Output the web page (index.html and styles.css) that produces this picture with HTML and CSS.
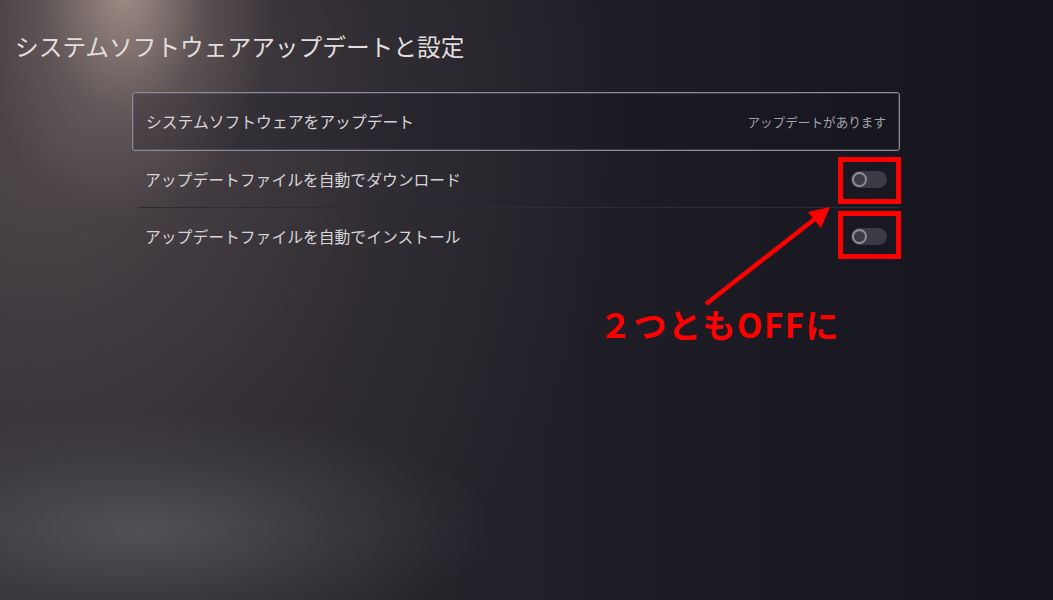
FILE: index.html
```html
<!DOCTYPE html>
<html lang="ja">
<head>
<meta charset="utf-8">
<link rel="stylesheet" href="styles.css">
</head>
<body>
<div class="screen">
  <h1 class="title">システムソフトウェアアップデートと設定</h1>
  <div class="list">
    <div class="row row-focus">
      <span class="label">システムソフトウェアをアップデート</span>
      <span class="value">アップデートがあります</span>
    </div>
    <div class="row row-sep">
      <span class="label">アップデートファイルを自動でダウンロード</span>
      <span class="toggle"><span class="knob"></span></span>
    </div>
    <div class="row">
      <span class="label">アップデートファイルを自動でインストール</span>
      <span class="toggle"><span class="knob"></span></span>
    </div>
  </div>
  <div class="mark mark-1"></div>
  <div class="mark mark-2"></div>
  <svg class="arrow" width="1053" height="600" viewBox="0 0 1053 600">
    <line x1="706" y1="304" x2="816" y2="218" stroke="#ff0000" stroke-width="4.5" stroke-linecap="butt"/>
    <polygon points="830,207 821,228 808,212" fill="#ff0000"/>
  </svg>
  <div class="note">２つともOFFに</div>
</div>
</body>
</html>
```
FILE: styles.css
```css
html, body {
  margin: 0;
  padding: 0;
}
body {
  width: 1053px;
  height: 600px;
  overflow: hidden;
  font-family: "Noto Sans CJK JP", "Noto Sans", sans-serif;
}
.screen {
  position: relative;
  width: 1053px;
  height: 600px;
  box-sizing: border-box;
  padding: 31px 0 0 0;
  background:
    radial-gradient(ellipse 150px 230px at 125px -10px, rgba(175,155,145,0.85), rgba(140,122,118,0.35) 55%, rgba(100,90,90,0) 100%),
    radial-gradient(ellipse 360px 120px at 140px 530px, rgba(95,95,102,0.7), rgba(80,80,88,0.3) 60%, rgba(70,70,80,0) 100%),
    radial-gradient(ellipse 560px 600px at 60px 140px, rgba(105,94,98,0.55), rgba(70,64,70,0.28) 60%, rgba(40,38,46,0) 100%),
    linear-gradient(90deg, #2f2b31 0%, #29262c 30%, #1e1d26 60%, #14141e 100%);
}
.title {
  margin: 0 0 0 15px;
  font-size: 23.7px;
  font-weight: 400;
  line-height: 30px;
  color: #e2dedd;
}
.list {
  margin: 31px 0 0 132px;
  width: 768px;
}
.row {
  height: 57px;
  display: flex;
  align-items: center;
  justify-content: space-between;
  box-sizing: border-box;
  padding: 0 13px 0 13px;
  color: #d6d4d6;
  font-size: 15.8px;
}
.row-focus {
  height: 59px;
  border: 1px solid #8d8b98;
  border-radius: 3px;
  box-shadow: inset 0 0 0 1px rgba(120,118,135,0.35);
  background: rgba(20,20,30,0.25);
}
.row-sep {
  border-bottom: 1px solid #2c2c36;
  margin-left: 6px;
  padding-left: 7px;
}
.value {
  font-size: 12.6px;
  color: #a4a2a8;
}
.toggle {
  width: 36px;
  height: 17px;
  border-radius: 9px;
  background: #3b3b45;
  display: flex;
  align-items: center;
  padding-left: 1px;
  box-sizing: border-box;
}
.knob {
  width: 15px;
  height: 15px;
  border-radius: 50%;
  border: 2px solid #8e8e96;
  box-sizing: border-box;
  background: #3b3b45;
}
.mark {
  position: absolute;
  left: 838px;
  width: 63px;
  height: 47px;
  border: 5px solid #ff0000;
  box-sizing: border-box;
}
.mark-1 { top: 157px; }
.mark-2 { top: 211px; height: 48px; }
.arrow {
  position: absolute;
  left: 0;
  top: 0;
}
.note {
  position: absolute;
  left: 599px;
  top: 302px;
  font-size: 33px;
  font-weight: 700;
  line-height: 44px;
  color: #ff0000;
  letter-spacing: 1.5px;
}
```
